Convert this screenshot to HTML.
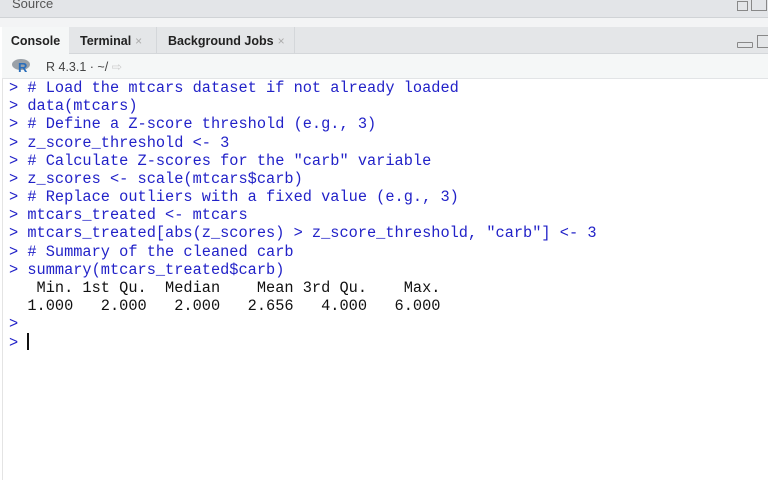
<!DOCTYPE html>
<html><head><style>
body{margin:0;width:768px;height:480px;overflow:hidden;background:#fff;font-family:"Liberation Sans",sans-serif;position:relative}
.top{position:absolute;left:0;top:0;width:768px;height:17px;background:#e3e5e8;border-bottom:1px solid #d0d3d6}
.top span{position:absolute;left:12px;top:-4px;font-size:13px;color:#555}
.gap{position:absolute;left:0;top:18px;width:768px;height:9px;background:#f3f4f5}
.tabs{position:absolute;left:2px;top:27px;width:766px;height:26px;background:#e4e6e8;border-bottom:1px solid #d4d7da}
.tab{position:absolute;top:0;height:26px;font-size:12.5px;font-weight:bold;color:#222;line-height:28px}
.tab .x{color:#aaa;font-weight:normal;font-size:12px;margin-left:4px}
.tool{position:absolute;left:2px;top:54px;width:766px;height:24px;background:#f5f7f7;border-bottom:1px solid #e2e4e6}
.con{position:absolute;left:2px;top:78px;width:766px;height:402px;border-left:1px solid #e4e4e4}
pre{margin:0;position:absolute;left:9px;top:79px;font-family:"Liberation Mono",monospace;font-size:15.3px;line-height:18.17px;color:#2222c8}
.o{color:#111}
</style></head><body>
<div class="top"><span>Source</span>
<div style="position:absolute;left:737px;top:1px;width:9px;height:8px;border:1px solid #888"></div>
<div style="position:absolute;left:751px;top:-2px;width:14px;height:11px;border:1px solid #888"></div></div>
<div class="gap"></div>
<div class="tabs">
<div class="tab" style="left:0;width:67px;background:#f5f7f7;height:27px;text-align:center">Console</div>
<div class="tab" style="left:78px">Terminal<span class="x">×</span></div>
<div style="position:absolute;left:154px;top:0;width:1px;height:26px;background:#d4d7da"></div>
<div class="tab" style="left:166px">Background Jobs<span class="x">×</span></div>
<div style="position:absolute;left:292px;top:0;width:1px;height:26px;background:#d4d7da"></div>
<div style="position:absolute;left:735px;top:15px;width:14px;height:4px;border:1px solid #888;border-radius:1px"></div>
<div style="position:absolute;left:755px;top:8px;width:14px;height:11px;border:1px solid #888"></div>
</div>
<div class="tool">
<div style="position:absolute;left:10px;top:5px;width:18px;height:11px;border-radius:50%;background:#9aa1a8"></div>
<div style="position:absolute;left:16px;top:6px;font-weight:bold;font-size:13px;color:#2a6ebb">R</div>
<div style="position:absolute;left:44px;top:5px;font-size:12.5px;color:#444">R 4.3.1 · ~/ <span style="color:#ccc">⇨</span></div>
</div>
<div class="con"></div>
<pre>&gt; # Load the mtcars dataset if not already loaded
&gt; data(mtcars)
&gt; # Define a Z-score threshold (e.g., 3)
&gt; z_score_threshold &lt;- 3
&gt; # Calculate Z-scores for the "carb" variable
&gt; z_scores &lt;- scale(mtcars$carb)
&gt; # Replace outliers with a fixed value (e.g., 3)
&gt; mtcars_treated &lt;- mtcars
&gt; mtcars_treated[abs(z_scores) &gt; z_score_threshold, "carb"] &lt;- 3
&gt; # Summary of the cleaned carb
&gt; summary(mtcars_treated$carb)
<span class="o">   Min. 1st Qu.  Median    Mean 3rd Qu.    Max. 
  1.000   2.000   2.000   2.656   4.000   6.000 </span>
&gt; 
&gt; <span style="display:inline-block;width:2px;height:17px;background:#111;vertical-align:-3px"></span></pre>
</body></html>
